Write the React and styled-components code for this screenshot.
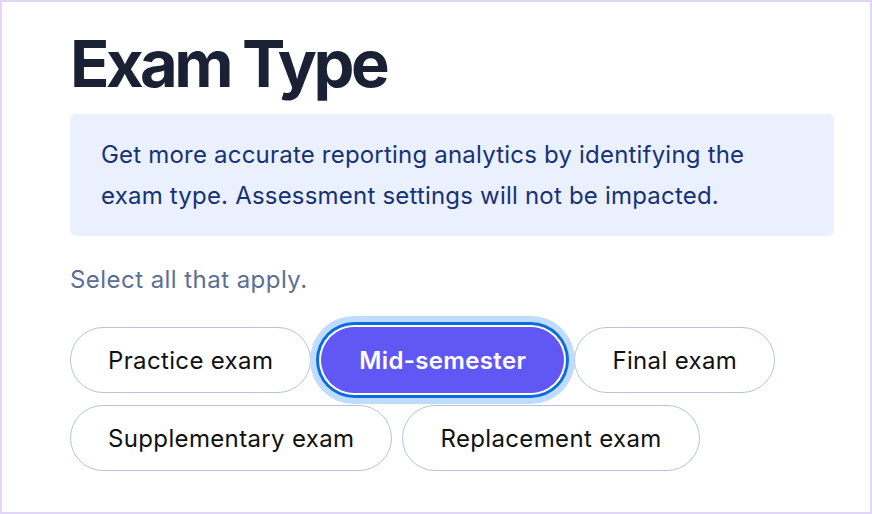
import React, { useState } from "react";
import styled, { createGlobalStyle } from "styled-components";

const GlobalStyle = createGlobalStyle`
  html, body {
    margin: 0;
    padding: 0;
    background: #ffffff;
  }
  body {
    font-family: Inter, "Liberation Sans", sans-serif;
  }
`;

const Frame = styled.div`
  box-sizing: border-box;
  width: 872px;
  height: 514px;
  border: 2px solid #e2d5f6;
  background: #ffffff;
  padding: 22px 36px 0 68px;
`;

const Title = styled.h1`
  margin: 0;
  font-size: 65px;
  line-height: 80px;
  font-weight: 700;
  color: #1b2135;
  letter-spacing: -3.5px;
`;

const InfoBox = styled.div`
  margin-top: 10px;
  background: #eaf0fd;
  border-radius: 6px;
  padding: 20px 30px 20px 31px;
  color: #163276;
  font-size: 24px;
  line-height: 41px;
  letter-spacing: 0.2px;
`;

const Hint = styled.p`
  margin: 29px 0 0;
  color: #5b6f95;
  font-size: 24px;
  line-height: 30px;
  letter-spacing: 0.45px;
`;

const ChipList = styled.div`
  display: flex;
  flex-wrap: wrap;
  gap: 12px 10px;
  margin-top: 32px;
  width: 740px;
`;

const Chip = styled.button`
  box-sizing: border-box;
  height: 66px;
  padding: 0 37px;
  border-radius: 33px;
  font-family: inherit;
  font-size: 24px;
  letter-spacing: 0.35px;
  cursor: pointer;
  border: 1px solid ${(p) => (p.$selected ? "#6157f4" : "#b8c3d7")};
  background: ${(p) => (p.$selected ? "#6157f4" : "#ffffff")};
  color: ${(p) => (p.$selected ? "#ffffff" : "#111111")};
  font-weight: ${(p) => (p.$selected ? 600 : 400)};
  box-shadow: ${(p) =>
    p.$selected
      ? "0 0 0 2px #ffffff, 0 0 0 5px #0b6ce0, 0 0 0 11px #c0dcfc"
      : "none"};
`;

const options = [
  "Practice exam",
  "Mid-semester",
  "Final exam",
  "Supplementary exam",
  "Replacement exam",
];

export default function App() {
  const [selected, setSelected] = useState(["Mid-semester"]);

  const toggle = (name) =>
    setSelected((s) =>
      s.includes(name) ? s.filter((x) => x !== name) : [...s, name]
    );

  return (
    <>
      <GlobalStyle />
      <Frame>
        <Title>Exam Type</Title>
        <InfoBox>
          Get more accurate reporting analytics by identifying the
          <br />
          exam type. Assessment settings will not be impacted.
        </InfoBox>
        <Hint>Select all that apply.</Hint>
        <ChipList>
          {options.map((o) => (
            <Chip
              key={o}
              $selected={selected.includes(o)}
              onClick={() => toggle(o)}
            >
              {o}
            </Chip>
          ))}
        </ChipList>
      </Frame>
    </>
  );
}
